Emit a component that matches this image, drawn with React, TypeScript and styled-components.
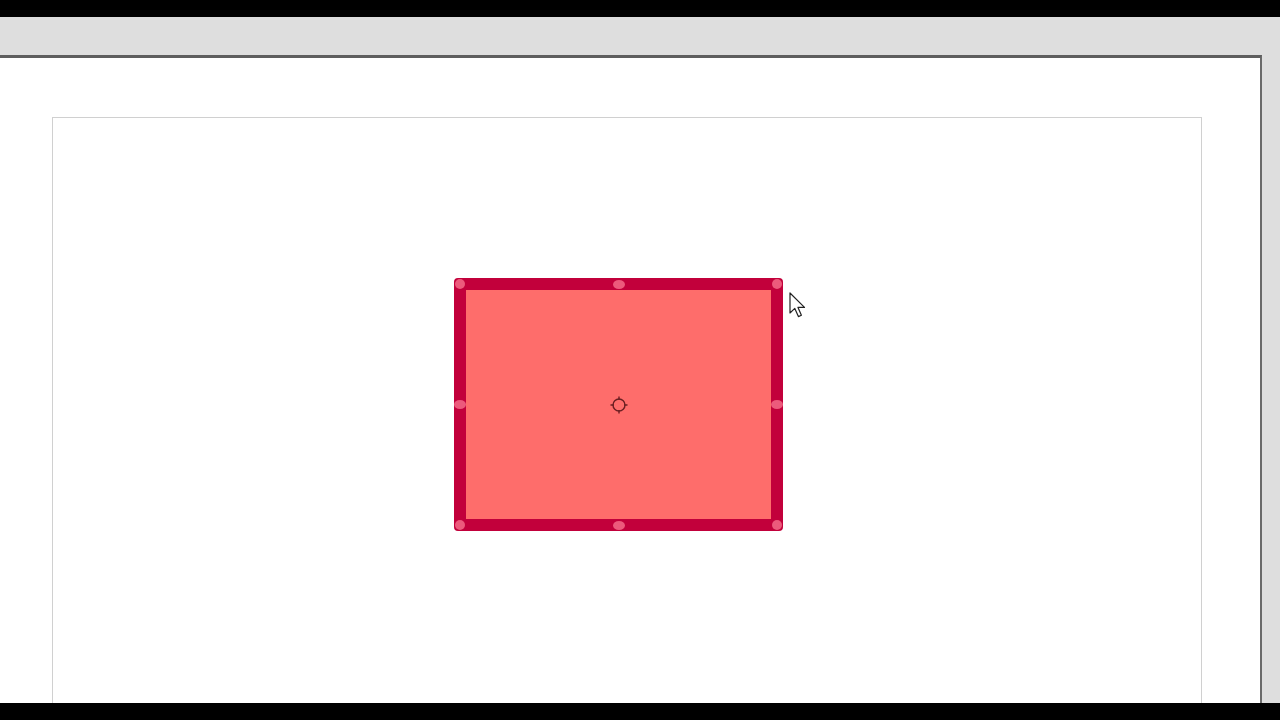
import React from "react";
import styled, { createGlobalStyle } from "styled-components";

const Global = createGlobalStyle`
  html, body { margin: 0; padding: 0; background: #000; overflow: hidden; }
  body { font-family: "Liberation Sans", Arial, sans-serif; }
`;

const Screen = styled.div`
  width: 1280px;
  height: 720px;
  display: flex;
  flex-direction: column;
  background: #000;
`;

const Letterbox = styled.div`
  height: 17px;
  flex: none;
  background: #000;
`;

const Toolbar = styled.div`
  height: 38px;
  flex: none;
  background: #dedede;
`;

const Main = styled.div`
  flex: 1;
  display: flex;
  background: #dedede;
  min-height: 0;
`;

const Sheet = styled.div`
  width: 1262px;
  box-sizing: border-box;
  background: #fff;
  border-top: 3px solid #5e5e5e;
  border-right: 2px solid #6a6a6a;
  padding: 59px 58px 0 52px;
  display: flex;
`;

const Canvas = styled.div`
  flex: 1;
  position: relative;
  border: 1px solid #d0d0d0;
  border-bottom: none;
`;

const Shape = styled.div`
  position: absolute;
  left: 401px;
  top: 160px;
  width: 329px;
  height: 253px;
  box-sizing: border-box;
  background: #fe6d6b;
  border: 12px solid #c2003b;
  border-radius: 4px;
`;

const Handle = styled.div<{ $x: string; $y: string; $wide?: boolean }>`
  position: absolute;
  left: calc(${(p) => p.$x} - ${(p) => (p.$wide ? 6 : 5)}px);
  top: calc(${(p) => p.$y} - ${(p) => (p.$wide ? 4.5 : 5)}px);
  width: ${(p) => (p.$wide ? 12 : 10)}px;
  height: ${(p) => (p.$wide ? 9 : 10)}px;
  border-radius: 50%;
  background: #ec5a7c;
`;

const Crosshair = styled.svg`
  position: absolute;
  left: 50%;
  top: 50%;
  width: 22px;
  height: 22px;
  transform: translate(-50%, -50%);
`;

const Cursor = styled.svg`
  position: absolute;
  left: 736px;
  top: 174px;
  width: 20px;
  height: 28px;
`;

const handles: { x: string; y: string; wide?: boolean }[] = [
  { x: "-6px", y: "-6px" },
  { x: "50%", y: "-6px", wide: true },
  { x: "calc(100% + 6px)", y: "-6px" },
  { x: "-6px", y: "50%", wide: true },
  { x: "calc(100% + 6px)", y: "50%", wide: true },
  { x: "-6px", y: "calc(100% + 6px)" },
  { x: "50%", y: "calc(100% + 6px)", wide: true },
  { x: "calc(100% + 6px)", y: "calc(100% + 6px)" },
];

export default function App() {
  return (
    <>
      <Global />
      <Screen>
        <Letterbox />
        <Toolbar />
        <Main>
          <Sheet>
            <Canvas>
              <Shape>
                {handles.map((h, i) => (
                  <Handle key={i} $x={h.x} $y={h.y} $wide={h.wide} />
                ))}
                <Crosshair viewBox="0 0 22 22">
                  <circle cx="11" cy="11" r="6" fill="none" stroke="#6b1f22" strokeWidth="1.4" />
                  <path d="M11 2.5v3.5M11 16v3.5M2.5 11h3.5M16 11h3.5" stroke="#6b1f22" strokeWidth="1.4" />
                </Crosshair>
              </Shape>
              <Cursor viewBox="0 0 20 28">
                <path
                  d="M1 1 L1 21 L5.8 16.4 L9.4 24.6 L12.4 23.3 L9 15.4 L15.5 15.4 Z"
                  fill="#fff"
                  stroke="#222"
                  strokeWidth="1.2"
                  strokeLinejoin="round"
                />
              </Cursor>
            </Canvas>
          </Sheet>
        </Main>
        <Letterbox />
      </Screen>
    </>
  );
}
